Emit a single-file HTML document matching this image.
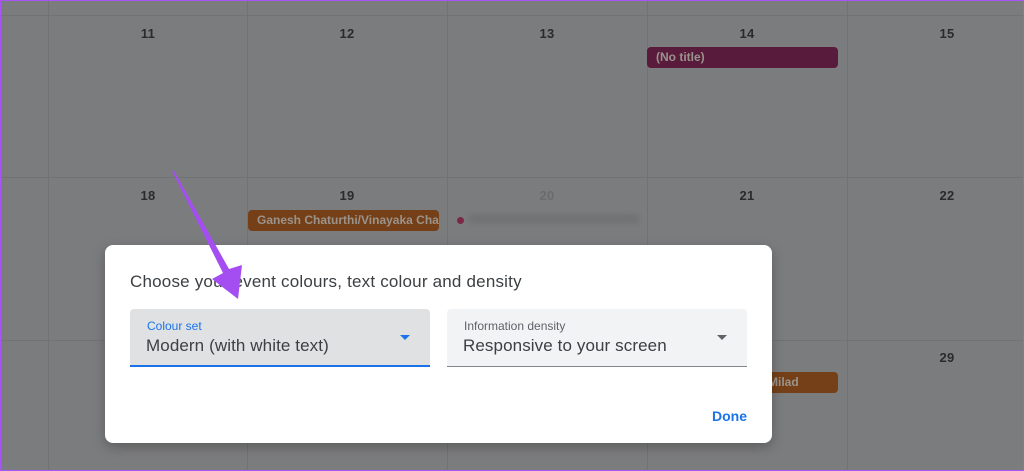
<!DOCTYPE html>
<html><head><style>
body{margin:0;width:1024px;height:471px;overflow:hidden;background:#7b7c7e;font-family:"Liberation Sans",Arial,sans-serif;position:relative}
.frame{position:absolute;inset:0;border:1px solid #a855f7;box-sizing:border-box;z-index:10;pointer-events:none}
.v{position:absolute;top:0;bottom:0;width:1px;background:#717274}
.h{position:absolute;left:0;right:0;height:1px;background:#717274}
.n{position:absolute;font-size:13px;color:#2a2b2d;width:40px;text-align:center;margin-left:-20px;font-weight:bold;letter-spacing:0.3px}
.ev{position:absolute;height:21px;border-radius:4px;font-size:12px;font-weight:bold;color:#9a938c;line-height:21px;padding-left:9px;box-sizing:border-box;overflow:hidden;white-space:nowrap}
.dlg{position:absolute;left:105px;top:245px;width:667px;height:198px;background:#fff;border-radius:8px;box-shadow:0 4px 12px rgba(0,0,0,.25)}
.t{position:absolute;left:25px;top:27px;font-size:17px;letter-spacing:0.2px;color:#3c4043}
.f{position:absolute;top:64px;width:300px;height:58px;border-radius:4px 4px 0 0;box-sizing:border-box}
.f .l{position:absolute;left:17px;top:10px;font-size:12px}
.f .vv{position:absolute;left:16px;top:27px;font-size:17px;color:#3c4043;letter-spacing:0.1px}
.f .a{position:absolute;right:20px;top:26px;width:0;height:0;border-left:5px solid transparent;border-right:5px solid transparent;border-top:5px solid}
</style></head><body>
<div class="h" style="top:15px"></div><div class="h" style="top:177px"></div><div class="h" style="top:340px"></div>
<div class="v" style="left:48px"></div><div class="v" style="left:247px"></div><div class="v" style="left:447px"></div><div class="v" style="left:647px"></div><div class="v" style="left:847px"></div>
<div class="n" style="left:148px;top:26px">11</div><div class="n" style="left:347px;top:26px">12</div><div class="n" style="left:547px;top:26px">13</div><div class="n" style="left:747px;top:26px">14</div><div class="n" style="left:947px;top:26px">15</div>
<div class="n" style="left:148px;top:188px">18</div><div class="n" style="left:347px;top:188px">19</div><div class="n" style="left:547px;top:188px;color:#6a6b6d">20</div><div class="n" style="left:747px;top:188px">21</div><div class="n" style="left:947px;top:188px">22</div>
<div class="n" style="left:947px;top:350px">29</div>
<div class="ev" style="left:647px;top:47px;width:191px;background:#581b3b">(No title)</div>
<div class="ev" style="left:248px;top:210px;width:191px;background:#754017">Ganesh Chaturthi/Vinayaka Cha</div>
<div style="position:absolute;left:457px;top:217px;width:7px;height:7px;border-radius:50%;background:#7a2844"></div>
<div style="position:absolute;left:468px;top:214px;width:172px;height:10px;border-radius:5px;background:#727375;filter:blur(2px)"></div>
<div class="ev" style="left:700px;top:372px;width:138px;background:#754017;padding-left:68px">Milad</div>
<div class="dlg">
<div class="t">Choose your event colours, text colour and density</div>
<div class="f" style="left:25px;background:#e0e1e3;border-bottom:2px solid #1a73e8"><div class="l" style="color:#1a73e8">Colour set</div><div class="vv">Modern (with white text)</div><div class="a" style="color:#1a73e8"></div></div>
<div class="f" style="left:342px;background:#f1f3f4;border-bottom:1px solid #80868b"><div class="l" style="color:#5f6368">Information density</div><div class="vv">Responsive to your screen</div><div class="a" style="color:#5f6368"></div></div>
<div style="position:absolute;left:607px;top:163px;font-size:14px;font-weight:bold;color:#1a73e8">Done</div>
</div>
<svg style="position:absolute;left:0;top:0" width="1024" height="471"><polygon points="172,171 174,171 229,269 242,265 238,299 212,279 223,273" fill="#a44ef2"/></svg>
<div class="frame"></div>
</body></html>
